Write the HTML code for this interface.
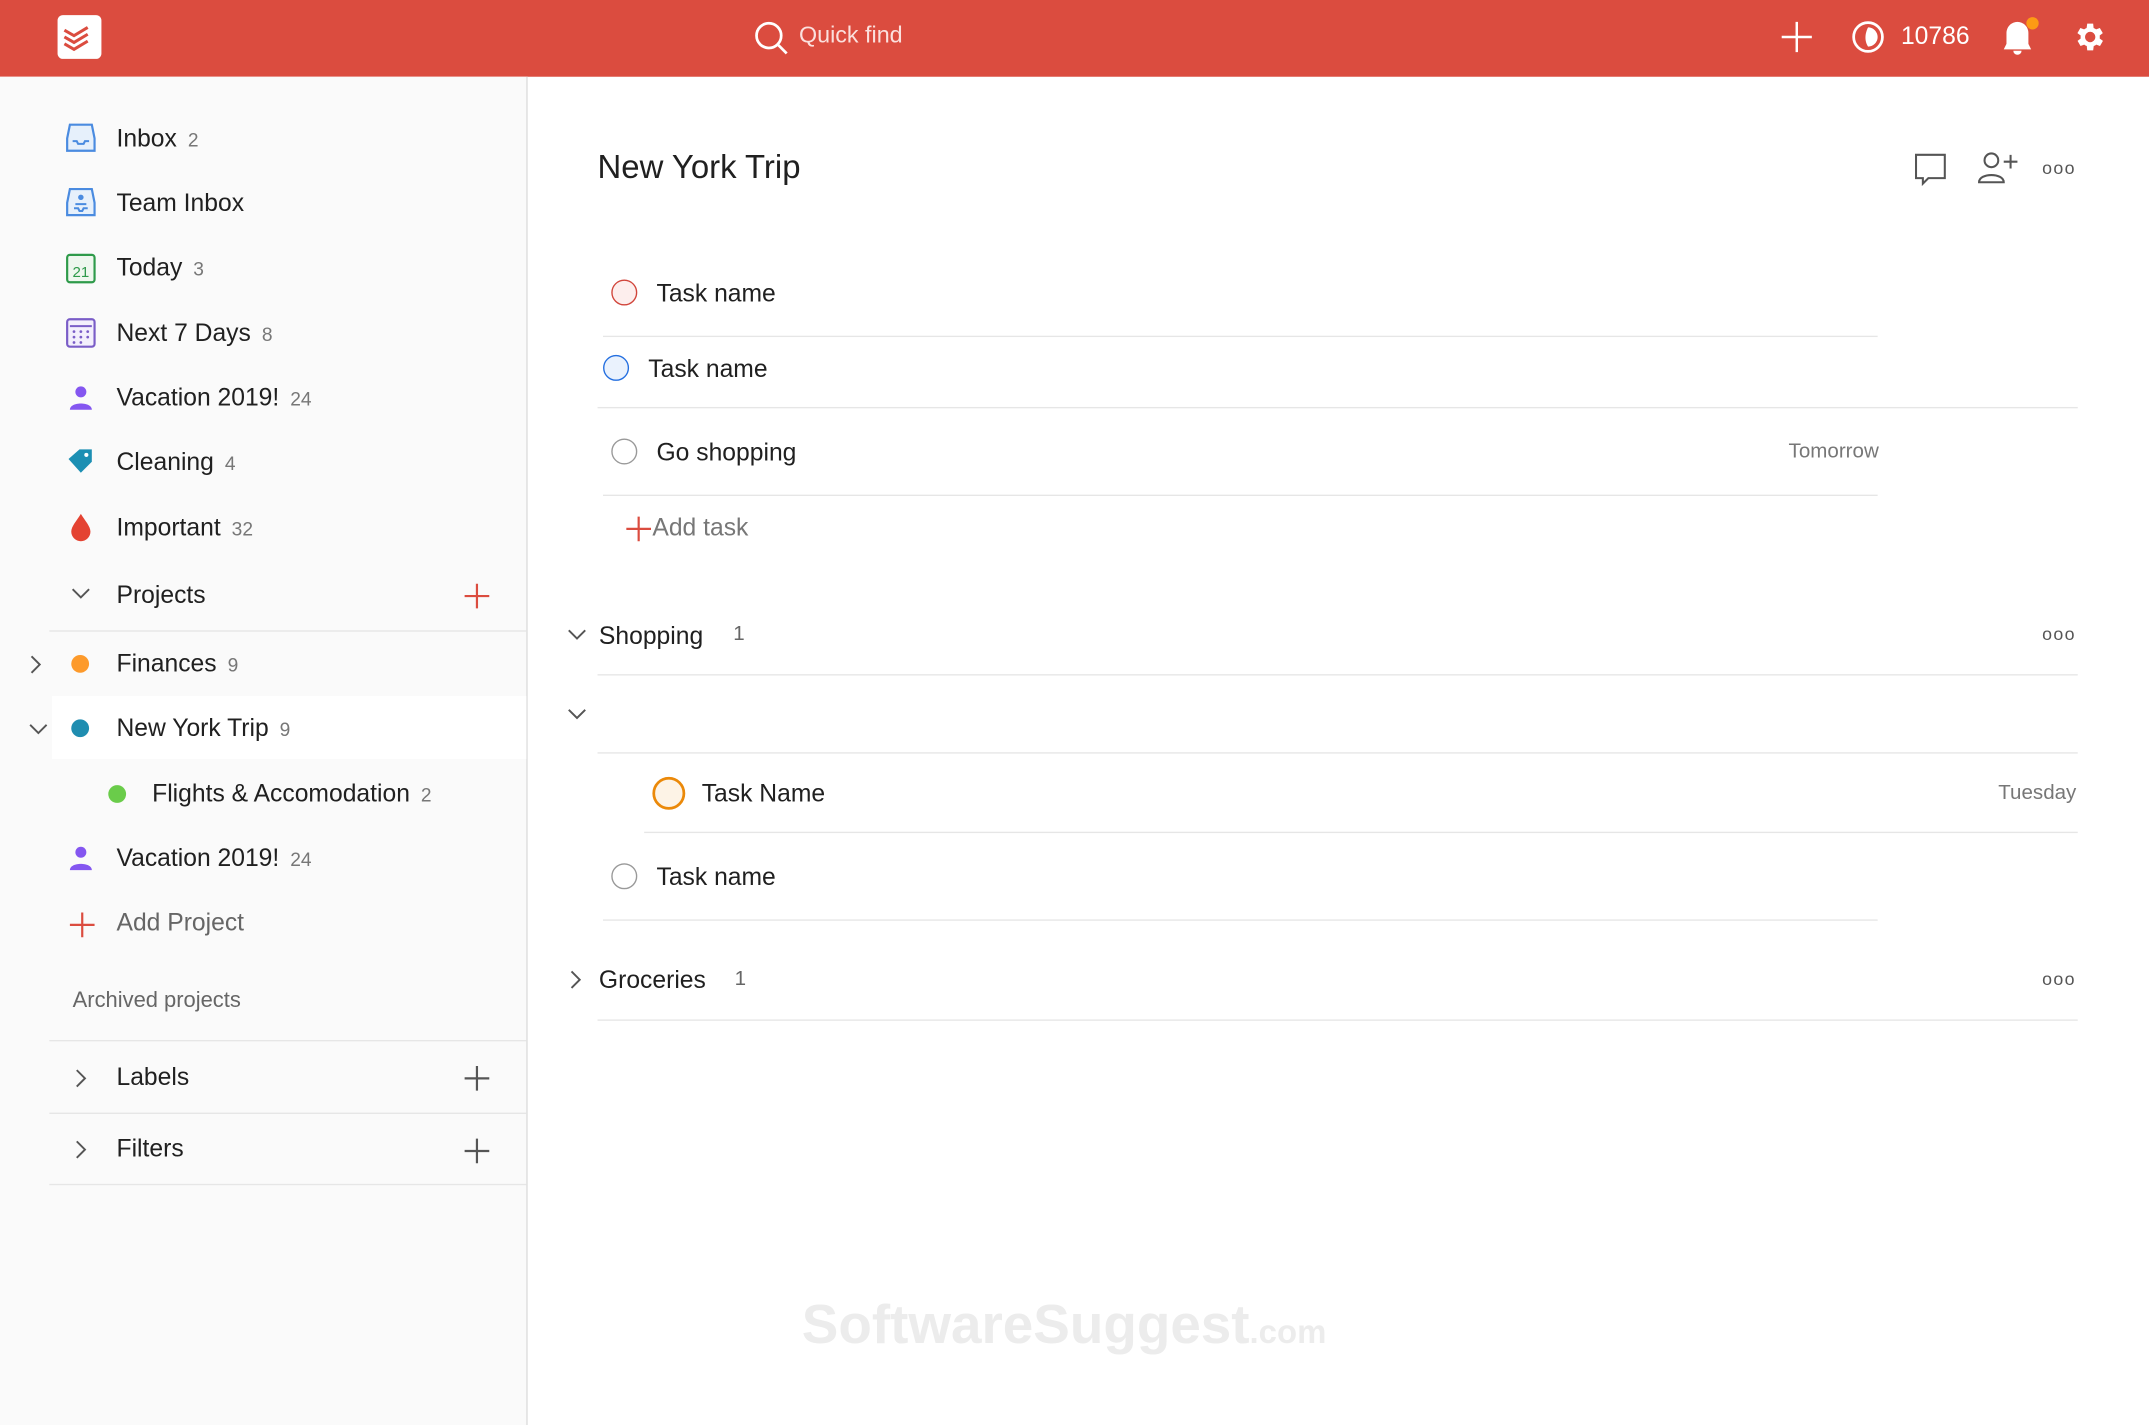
<!DOCTYPE html>
<html><head><meta charset="utf-8"><style>
html,body{margin:0;padding:0;width:2149px;height:1425px;overflow:hidden;background:#fff;}
#w{position:absolute;left:0;top:0;width:1568px;height:1040px;transform:scale(1.37054,1.3702);transform-origin:0 0;font-family:"Liberation Sans",sans-serif;color:#202020;}
.a{position:absolute;white-space:nowrap;}
.hdr{left:0;top:0;width:1568px;height:56px;background:#db4c3f;}
.side{left:0;top:56px;width:384px;height:984px;background:#fafafa;border-right:1px solid #ddd;}
.it{font-size:18px;}
.c{font-size:14px;color:#777;margin-left:8px;}
.ln{height:1px;background:#e6e6e6;}
.t{font-size:18px;}
.ck{position:absolute;width:17px;height:17px;border-radius:50%;border:1.5px solid #999;}
.dot3{font-size:13px;color:#555;letter-spacing:1px;}
</style></head><body><div id="w">
<div class="a hdr"></div>
<div class="a" style="left:42px;top:11px;width:32px;height:32px;background:#fff;border-radius:4px;"></div>
<svg class="a" style="left:42px;top:11px" width="32" height="32"><path d="M5 11l7 4 10-6M5 16l7 4 10-6M5 21l7 4 10-6" stroke="#db4c3f" stroke-width="2.2" fill="none"/></svg>
<svg class="a" style="left:549px;top:14px" width="28" height="28"><circle cx="12" cy="12" r="9" stroke="#fff" stroke-width="2" fill="none"/><path d="M19 19l6 6" stroke="#fff" stroke-width="2"/></svg>
<div class="a" style="left:583px;top:16px;font-size:17px;color:#fbe0dd;">Quick find</div>
<svg class="a" style="left:1299px;top:15px" width="24" height="24"><path d="M12 1v22M1 12h22" stroke="#fff" stroke-width="1.8"/></svg>
<svg class="a" style="left:1350px;top:14px" width="26" height="26"><circle cx="13" cy="13" r="10.5" stroke="#fff" stroke-width="2" fill="none"/><path d="M13 6a7 7 0 0 1 0 14c-2-3-3-8 0-14z" fill="#fff"/></svg>
<div class="a" style="left:1387px;top:16px;font-size:18px;color:#fff;">10786</div>
<svg class="a" style="left:1458px;top:12px" width="30" height="30"><path d="M4 24h20l-2-4v-8a8 8 0 0 0-16 0v8z M11 25a3 3 0 0 0 6 0z" fill="#fff"/><circle cx="25" cy="5" r="4.5" fill="#fd9a14"/></svg>
<svg class="a" style="left:1511px;top:14px" width="26" height="26" viewBox="0 0 24 24"><path fill="#fff" d="M19.4 13a7.5 7.5 0 0 0 0-2l2.1-1.6-2-3.5-2.5 1a7 7 0 0 0-1.7-1L15 3h-4l-.4 2.9a7 7 0 0 0-1.700 1l-2.5-1-2 3.5L6.6 11a7.5 7.5 0 0 0 0 2l-2.1 1.6 2 3.5 2.5-1a7 7 0 0 0 1.7 1L11 21h4l.4-2.9a7 7 0 0 0 1.7-1l2.5 1 2-3.5zM13 15.5a3.5 3.5 0 1 1 0-7 3.5 3.5 0 0 1 0 7z"/></svg>

<div class="a side"></div>
<svg class="a" style="left:48px;top:89px" width="22" height="24"><path d="M3 2h16l2 10v9H1v-9z" fill="#e6f0fb" stroke="#4a8be0" stroke-width="1.6"/><path d="M5 14h3l1 2h4l1-2h3" stroke="#4a8be0" stroke-width="1.5" fill="none"/></svg>
<div class="a it" style="left:85px;top:91px">Inbox<span class="c">2</span></div>
<svg class="a" style="left:48px;top:136px" width="22" height="24"><path d="M3 2h16l2 10v9H1v-9z" fill="#e6f0fb" stroke="#4a8be0" stroke-width="1.6"/><circle cx="11" cy="8" r="2" fill="#4a8be0"/><path d="M7 13h8M6 16h3l1 2h2l1-2h3" stroke="#4a8be0" stroke-width="1.5" fill="none"/></svg>
<div class="a it" style="left:85px;top:138px">Team Inbox</div>
<svg class="a" style="left:48px;top:184px" width="22" height="24"><rect x="1" y="2" width="20" height="20" rx="2" fill="#eef7ee" stroke="#2e9a4a" stroke-width="1.6"/><text x="11" y="18" font-size="11" text-anchor="middle" fill="#2e9a4a" font-family="Liberation Sans">21</text></svg>
<div class="a it" style="left:85px;top:185px">Today<span class="c">3</span></div>
<svg class="a" style="left:48px;top:231px" width="22" height="24"><rect x="1" y="2" width="20" height="20" rx="2" fill="#f3effc" stroke="#7a5dc7" stroke-width="1.6"/><path d="M3 7h16" stroke="#7a5dc7" stroke-width="1.5"/><g fill="#7a5dc7"><circle cx="6" cy="11" r="1"/><circle cx="11" cy="11" r="1"/><circle cx="16" cy="11" r="1"/><circle cx="6" cy="15" r="1"/><circle cx="11" cy="15" r="1"/><circle cx="16" cy="15" r="1"/><circle cx="6" cy="19" r="1"/><circle cx="11" cy="19" r="1"/></g></svg>
<div class="a it" style="left:85px;top:233px">Next 7 Days<span class="c">8</span></div>
<svg class="a" style="left:48px;top:280px" width="22" height="20"><circle cx="11" cy="6" r="4" fill="#8456f0"/><path d="M3 19c0-6 16-6 16 0z" fill="#8456f0"/></svg>
<div class="a it" style="left:85px;top:280px">Vacation 2019!<span class="c">24</span></div>
<svg class="a" style="left:48px;top:327px" width="22" height="20"><path d="M2 8l8-7h9v9l-8 8z" fill="#1c8fb3"/><circle cx="15" cy="5" r="1.5" fill="#fff"/></svg>
<div class="a it" style="left:85px;top:327px">Cleaning<span class="c">4</span></div>
<svg class="a" style="left:49px;top:374px" width="20" height="22"><path d="M10 1c3 5 7 9 7 13a7 7 0 0 1-14 0c0-4 4-8 7-13z" fill="#e44332"/></svg>
<div class="a it" style="left:85px;top:375px">Important<span class="c">32</span></div>
<svg class="a" style="left:51px;top:427px" width="16" height="12"><path d="M2 3l6 6 6-6" stroke="#555" stroke-width="1.4" fill="none"/></svg>
<div class="a it" style="left:85px;top:424px">Projects</div>
<svg class="a" style="left:338px;top:425px" width="20" height="20"><path d="M10 1v18M1 10h18" stroke="#db4c3f" stroke-width="1.6"/></svg>
<div class="a ln" style="left:36px;top:460px;width:348px;"></div>
<svg class="a" style="left:20px;top:477px" width="12" height="16"><path d="M3 2l6 6-6 6" stroke="#555" stroke-width="1.4" fill="none"/></svg>
<div class="a" style="left:52px;top:478px;width:13px;height:13px;border-radius:50%;background:#fd9a2b"></div>
<div class="a it" style="left:85px;top:474px">Finances<span class="c">9</span></div>
<div class="a" style="left:38px;top:508px;width:346px;height:46px;background:#fff;"></div>
<svg class="a" style="left:20px;top:526px" width="16" height="12"><path d="M2 3l6 6 6-6" stroke="#555" stroke-width="1.4" fill="none"/></svg>
<div class="a" style="left:52px;top:525px;width:13px;height:13px;border-radius:50%;background:#1f8db0"></div>
<div class="a it" style="left:85px;top:521px">New York Trip<span class="c">9</span></div>
<div class="a" style="left:79px;top:573px;width:13px;height:13px;border-radius:50%;background:#6acc4a"></div>
<div class="a it" style="left:111px;top:569px">Flights &amp; Accomodation<span class="c">2</span></div>
<svg class="a" style="left:48px;top:616px" width="22" height="20"><circle cx="11" cy="6" r="4" fill="#8456f0"/><path d="M3 19c0-6 16-6 16 0z" fill="#8456f0"/></svg>
<div class="a it" style="left:85px;top:616px">Vacation 2019!<span class="c">24</span></div>
<svg class="a" style="left:50px;top:665px" width="20" height="20"><path d="M10 1v18M1 10h18" stroke="#db4c3f" stroke-width="1.6"/></svg>
<div class="a it" style="left:85px;top:663px;color:#666">Add Project</div>
<div class="a" style="left:53px;top:722px;font-size:16px;color:#666">Archived projects</div>
<div class="a ln" style="left:36px;top:759px;width:348px;"></div>
<svg class="a" style="left:53px;top:779px" width="12" height="16"><path d="M3 2l6 6-6 6" stroke="#555" stroke-width="1.4" fill="none"/></svg>
<div class="a it" style="left:85px;top:776px">Labels</div>
<svg class="a" style="left:338px;top:777px" width="20" height="20"><path d="M10 1v18M1 10h18" stroke="#555" stroke-width="1.6"/></svg>
<div class="a ln" style="left:36px;top:812px;width:348px;"></div>
<svg class="a" style="left:53px;top:831px" width="12" height="16"><path d="M3 2l6 6-6 6" stroke="#555" stroke-width="1.4" fill="none"/></svg>
<div class="a it" style="left:85px;top:828px">Filters</div>
<svg class="a" style="left:338px;top:830px" width="20" height="20"><path d="M10 1v18M1 10h18" stroke="#555" stroke-width="1.6"/></svg>
<div class="a ln" style="left:36px;top:864px;width:348px;"></div>

<div class="a" style="left:436px;top:109px;font-size:24px;">New York Trip</div>
<svg class="a" style="left:1396px;top:111px" width="26" height="26"><path d="M2 2h21v17H11l-4 4v-4H2z" stroke="#555" stroke-width="1.5" fill="none"/></svg>
<svg class="a" style="left:1442px;top:110px" width="32" height="26"><circle cx="11" cy="7" r="5" stroke="#555" stroke-width="1.5" fill="none"/><path d="M2 23c0-7 18-7 18 0z" stroke="#555" stroke-width="1.5" fill="none"/><path d="M25 3v10M20 8h10" stroke="#555" stroke-width="1.5"/></svg>
<div class="a dot3" style="left:1490px;top:115px">ooo</div>

<div class="ck" style="left:446px;top:204px;border-color:#d1453b;background:#fdeeed"></div>
<div class="a t" style="left:479px;top:204px">Task name</div>
<div class="a ln" style="left:440px;top:245px;width:930px;"></div>
<div class="ck" style="left:440px;top:259px;border-color:#246fe0;background:#eaf2fd"></div>
<div class="a t" style="left:473px;top:259px">Task name</div>
<div class="a ln" style="left:436px;top:297px;width:1080px;"></div>
<div class="ck" style="left:446px;top:320px"></div>
<div class="a t" style="left:479px;top:320px">Go shopping</div>
<div class="a" style="left:1305px;top:321px;font-size:15px;color:#777">Tomorrow</div>
<div class="a ln" style="left:440px;top:361px;width:930px;"></div>
<svg class="a" style="left:456px;top:376px" width="20" height="20"><path d="M10 1v18M1 10h18" stroke="#db4c3f" stroke-width="1.6"/></svg>
<div class="a t" style="left:476px;top:375px;color:#777">Add task</div>

<svg class="a" style="left:413px;top:457px" width="16" height="12"><path d="M2 3l6 6 6-6" stroke="#555" stroke-width="1.4" fill="none"/></svg>
<div class="a t" style="left:437px;top:454px">Shopping</div>
<div class="a" style="left:535px;top:454px;font-size:15px;color:#666">1</div>
<div class="a dot3" style="left:1490px;top:455px">ooo</div>
<div class="a ln" style="left:436px;top:492px;width:1080px;"></div>
<svg class="a" style="left:413px;top:515px" width="16" height="12"><path d="M2 3l6 6 6-6" stroke="#555" stroke-width="1.4" fill="none"/></svg>
<div class="a ln" style="left:436px;top:549px;width:1080px;"></div>
<div class="ck" style="left:476px;top:567px;width:20px;height:20px;border:2px solid #eb8909;background:#fdf3e6"></div>
<div class="a t" style="left:512px;top:569px">Task Name</div>
<div class="a" style="left:1458px;top:570px;font-size:15px;color:#777">Tuesday</div>
<div class="a ln" style="left:470px;top:607px;width:1046px;"></div>
<div class="ck" style="left:446px;top:630px"></div>
<div class="a t" style="left:479px;top:630px">Task name</div>
<div class="a ln" style="left:440px;top:671px;width:930px;"></div>
<svg class="a" style="left:414px;top:707px" width="12" height="16"><path d="M3 2l6 6-6 6" stroke="#555" stroke-width="1.4" fill="none"/></svg>
<div class="a t" style="left:437px;top:705px">Groceries</div>
<div class="a" style="left:536px;top:706px;font-size:15px;color:#666">1</div>
<div class="a dot3" style="left:1490px;top:707px">ooo</div>
<div class="a ln" style="left:436px;top:744px;width:1080px;"></div>

<div class="a" style="left:585px;top:945px;font-size:40px;font-weight:bold;color:#ececec">SoftwareSuggest<span style="font-size:24px">.com</span></div>
</div></body></html>
